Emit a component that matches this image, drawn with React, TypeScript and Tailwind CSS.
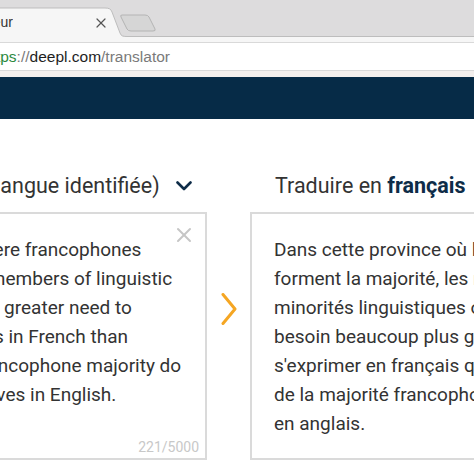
import { X } from 'lucide-react';

const sourceLines = [
  'In this province where francophones',
  'form the majority, members of linguistic',
  'minorities feel a far greater need to',
  'express themselves in French than',
  'members of the francophone majority do',
  'to express themselves in English.',
];

const targetLines = [
  'Dans cette province où les francophones',
  'forment la majorité, les membres des',
  'minorités linguistiques ont',
  'besoin beaucoup plus grand de',
  "s'exprimer en français que les membres",
  "de la majorité francophone de s'exprimer",
  'en anglais.',
];

function BrowserChrome() {
  return (
    <div className="font-['Liberation_Sans',Arial,sans-serif]">
      {/* Tab strip */}
      <div className="relative h-[37px] bg-[#dddcdd]">
        <svg className="absolute inset-0" width="474" height="37" viewBox="0 0 474 37">
          <path d="M-10 37 L-10 8 L105 8 C109 8 111 9 112 12 L120 33 C121 36 123 37 127 37 Z" fill="#f6f6f6" />
          <path d="M-10 8 L105 8 C109 8 111 9 112 12 L120 33 C121 36 123 36.5 127 36.5 L474 36.5" fill="none" stroke="#bdbdbd" />
          <path d="M122 15 H145 Q148 15 149 17 L155 29 Q156 31 153 31 H131 Q128 31 127 29 L121 17 Q120 15 122 15 Z" fill="#d6d6d6" stroke="#b4b4b4" />
        </svg>
        <div className="relative flex h-full items-center pt-[8px] text-[14px] text-[#333]">
          <div className="flex w-[13px] justify-end overflow-hidden whitespace-nowrap">DeepL Traducteur</div>
          <X className="ml-[80px] h-[16px] w-[16px] text-[#555]" strokeWidth={1.8} />
        </div>
      </div>
      {/* Toolbar */}
      <div className="bg-[#f6f6f6] pt-[5px]">
        <div className="flex h-[29px] items-center border-y border-[#d9d9d9] bg-white text-[15.5px] whitespace-nowrap">
          <span className="ml-[-17px] text-[#2b8a3e]">https</span>
          <span className="text-[#7a7a7a]">://</span>
          <span className="text-[#1e1e1e]">deepl.com</span>
          <span className="text-[#7a7a7a]">/translator</span>
        </div>
        <div className="h-[6px] bg-[#f3efed]" />
      </div>
    </div>
  );
}

function Translator() {
  return (
    <div className="ml-[-188px] flex pt-[47px] font-['Roboto',sans-serif] text-[#333]">
      {/* Source column */}
      <div className="w-[395px] shrink-0">
        <div className="flex h-[40px] items-center gap-[16px] pl-[23px] text-[21.5px] whitespace-nowrap">
          <span>Traduire depuis (langue identifiée)</span>
          <svg width="16" height="10" viewBox="0 0 16 10" fill="none">
            <path d="M1.5 1.5 L8 8 L14.5 1.5" stroke="#0e2c48" strokeWidth="2.6" strokeLinecap="round" strokeLinejoin="round" />
          </svg>
        </div>
        <div className="relative mt-[6px] h-[248px] border-2 border-[#dadada] px-[22px] pt-[21px] text-[19px] leading-[29px]">
          {sourceLines.map((line, i) => (
            <div key={i} className="whitespace-nowrap">{line}</div>
          ))}
          <X className="absolute right-[9px] top-[9px] h-[24px] w-[24px] text-[#c6c6c6]" strokeWidth={2} />
          <span className="absolute bottom-[3px] right-[6px] text-[14px] leading-[16px] text-[#c8c8c8]">221/5000</span>
        </div>
      </div>

      {/* Arrow */}
      <div className="flex w-[43px] shrink-0 justify-center pt-[127px]">
        <svg width="16" height="32" viewBox="0 0 16 32" fill="none">
          <path d="M2 1.5 L14 16 L2 30.5" stroke="#f5a623" strokeWidth="3" strokeLinecap="round" strokeLinejoin="round" />
        </svg>
      </div>

      {/* Target column */}
      <div className="w-[389px] shrink-0">
        <div className="flex h-[40px] items-center pl-[25px] text-[21.5px] whitespace-nowrap">
          <span>
            Traduire en <span className="font-bold text-[#0e2c48]">français</span>
          </span>
        </div>
        <div className="mt-[6px] h-[248px] border-2 border-[#dadada] px-[22px] pt-[21px] text-[19px] leading-[29px]">
          {targetLines.map((line, i) => (
            <div key={i} className="whitespace-nowrap">{line}</div>
          ))}
        </div>
      </div>
    </div>
  );
}

export default function App() {
  return (
    <div className="h-[474px] w-[474px] overflow-hidden bg-white">
      <BrowserChrome />
      <div className="h-[42px] bg-[#062b47]" />
      <Translator />
    </div>
  );
}
